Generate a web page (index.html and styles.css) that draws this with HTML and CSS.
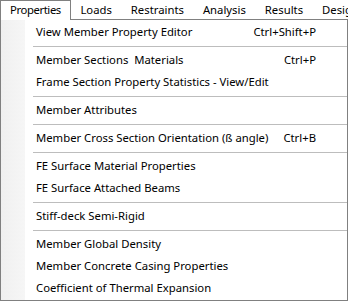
FILE: index.html
```html
<!DOCTYPE html>
<html>
<head>
  <title>Properties</title>
  <link rel="stylesheet" href="styles.css">
</head>
<body>
  <div class="menubar">
    <div class="menubar-item active">Properties</div>
    <div class="menubar-item">Loads</div>
    <div class="menubar-item">Restraints</div>
    <div class="menubar-item">Analysis</div>
    <div class="menubar-item">Results</div>
    <div class="menubar-item">Design</div>
  </div>

  <div class="dropdown">
    <div class="menu-item"><span>View Member Property Editor</span><span class="shortcut">Ctrl+Shift+P</span></div>
    <div class="separator"></div>
    <div class="menu-item"><span>Member Sections&nbsp; Materials</span><span class="shortcut">Ctrl+P</span></div>
    <div class="menu-item"><span>Frame Section Property Statistics - View/Edit</span></div>
    <div class="separator"></div>
    <div class="menu-item"><span>Member Attributes</span></div>
    <div class="separator"></div>
    <div class="menu-item"><span>Member Cross Section Orientation (ß angle)</span><span class="shortcut">Ctrl+B</span></div>
    <div class="separator"></div>
    <div class="menu-item"><span>FE Surface Material Properties</span></div>
    <div class="menu-item"><span>FE Surface Attached Beams</span></div>
    <div class="separator"></div>
    <div class="menu-item"><span>Stiff-deck Semi-Rigid</span></div>
    <div class="separator"></div>
    <div class="menu-item"><span>Member Global Density</span></div>
    <div class="menu-item"><span>Member Concrete Casing Properties</span></div>
    <div class="menu-item"><span>Coefficient of Thermal Expansion</span></div>
  </div>
</body>
</html>
```

FILE: styles.css
```css
* {
  box-sizing: border-box;
  margin: 0;
  padding: 0;
}

body {
  background: #fff;
  color: #000;
  font-family: "Noto Sans", "Open Sans", sans-serif;
  font-size: 11.3px;
  width: 348px;
  overflow: hidden;
}

.menubar {
  display: flex;
  height: 19px;
  white-space: nowrap;
}

.menubar-item {
  padding: 0 9.5px;
  line-height: 19px;
  flex-shrink: 0;
}

.menubar-item.active {
  position: relative;
  z-index: 1;
  height: 20px;
  padding: 0 9px;
  background: #fff;
  border: 1px solid #808080;
  border-bottom: none;
  line-height: 18px;
  letter-spacing: -0.4px;
}

.dropdown {
  border: 1px solid #808080;
  height: 282px;
  padding-top: 1px;
  background: linear-gradient(to right, #f0f0f0, #f6f6f6 24px, #fff 24px);
}

.menu-item {
  display: flex;
  justify-content: space-between;
  height: 22px;
  line-height: 22px;
  padding: 0 31px 0 35px;
  white-space: nowrap;
}

.separator {
  height: 6px;
  margin-left: 32px;
  padding-top: 3px;
}

.separator::after {
  content: "";
  display: block;
  height: 1px;
  background: #bdbdbd;
}
```
